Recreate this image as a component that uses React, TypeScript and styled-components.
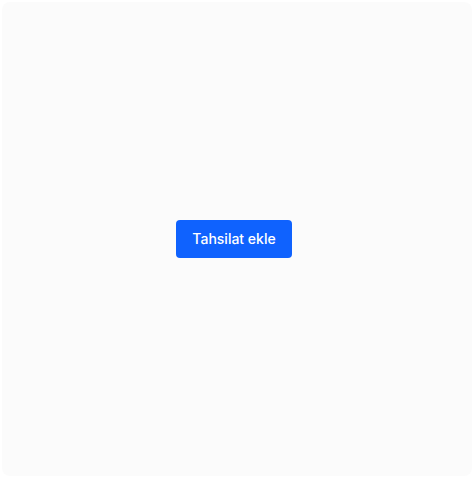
import { createGlobalStyle, styled } from 'styled-components';

const GlobalStyle = createGlobalStyle`
  * {
    box-sizing: border-box;
  }

  body {
    margin: 0;
    background: #ffffff;
    font-family: Inter, 'Liberation Sans', sans-serif;
  }
`;

const Page = styled.main`
  display: flex;
  min-height: 100vh;
  padding: 2px;
`;

const Panel = styled.section`
  flex: 1;
  display: flex;
  justify-content: center;
  align-items: center;
  padding: 16px 22px 16px 16px;
  background: #fbfbfb;
  border-radius: 8px;
`;

const AddButton = styled.button`
  padding: 9px 16px;
  border: none;
  border-radius: 4px;
  background: #0f62fe;
  color: #ffffff;
  font-family: inherit;
  font-size: 14px;
  font-weight: 500;
  line-height: 20px;
  cursor: pointer;
`;

const App = () => {
  return (
    <>
      <GlobalStyle />
      <Page>
        <Panel>
          <AddButton type="button">Tahsilat ekle</AddButton>
        </Panel>
      </Page>
    </>
  );
};

export default App;
